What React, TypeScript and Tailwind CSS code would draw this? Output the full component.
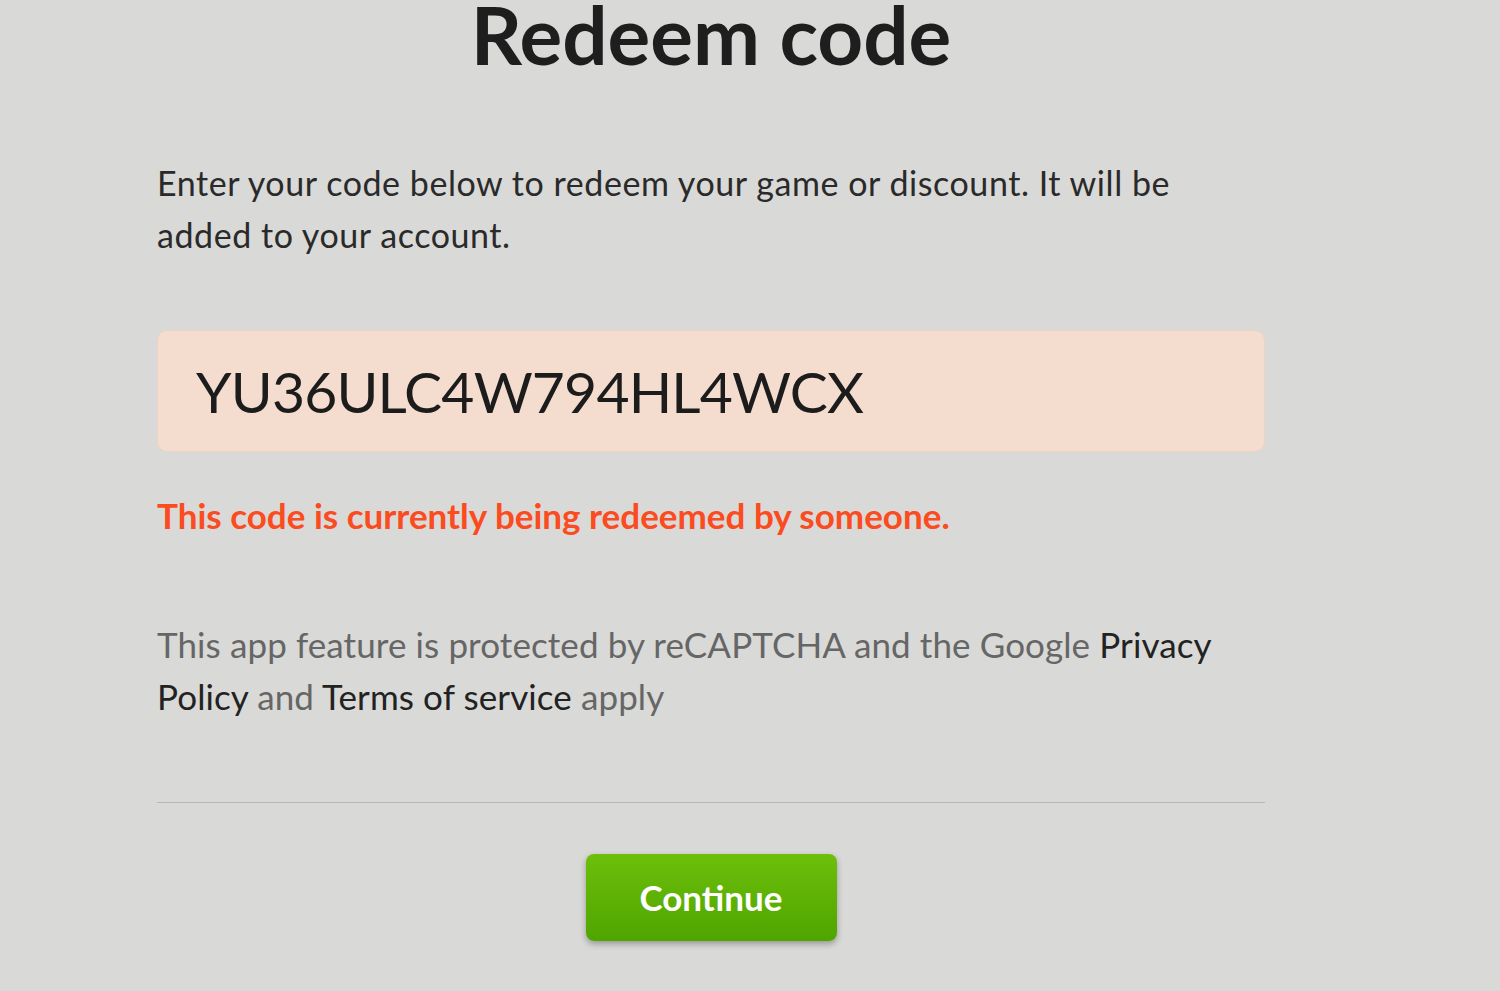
export default function App() {
  return (
    <div
      className="min-h-[991px] w-[1500px] overflow-hidden bg-[#d9d9d7]"
      style={{ fontFamily: 'Lato, "Open Sans", sans-serif' }}
    >
      <div className="ml-[157px] flex w-[1108px] flex-col">
        {/* Title */}
        <h1 className="mt-[-6px] text-center text-[80px] font-bold leading-[80px] text-[#1e1e1e]">
          Redeem code
        </h1>

        <p className="mt-[83px] pr-[40px] text-[34px] leading-[52px] tracking-[0.55px] text-[#2a2a2a]">
          Enter your code below to redeem your game or discount. It will be added to your account.
        </p>

        {/* Code input */}
        <div className="mt-[69px] flex h-[122px] items-center rounded-[10px] border border-[#ebd2c4] bg-[#f4ddcf] px-[38px]">
          <span className="text-[57px] leading-none tracking-[-0.8px] text-[#1c1c1c]">YU36ULC4W794HL4WCX</span>
        </div>

        <p className="mt-[37px] text-[35px] font-bold leading-[52px] text-[#fb4b20]">
          This code is currently being redeemed by someone.
        </p>

        <p className="mt-[77px] text-[35px] leading-[52px] tracking-[0.1px] text-[#666666]">
          This app feature is protected by reCAPTCHA and the Google{' '}
          <span className="text-[#222222]">Privacy Policy</span> and{' '}
          <span className="text-[#222222]">Terms of service</span> apply
        </p>

        <div className="mt-[80px] border-t border-[#b8b8b6]" />

        {/* Footer button */}
        <div className="mt-[51px] flex justify-center">
          <button className="h-[87px] w-[251px] rounded-[8px] bg-gradient-to-b from-[#6dbf0b] to-[#4fa500] text-[35px] font-bold text-white shadow-[0_3px_6px_rgba(0,0,0,0.3)]">
            Continue
          </button>
        </div>
      </div>
    </div>
  )
}
